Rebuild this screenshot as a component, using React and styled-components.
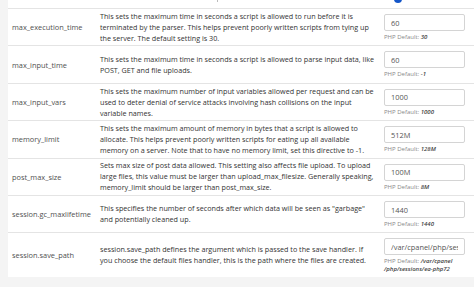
import styled, { createGlobalStyle } from "styled-components";

const GlobalStyle = createGlobalStyle`
  html, body {
    margin: 0;
    padding: 0;
    background: #f4f4f4;
    overflow: hidden;
  }
  body {
    font-family: "Open Sans", "Liberation Sans", sans-serif;
    color: #333;
  }
`;

const settings = [
  {
    name: "max_execution_time",
    desc: "This sets the maximum time in seconds a script is allowed to run before it is terminated by the parser. This helps prevent poorly written scripts from tying up the server. The default setting is 30.",
    value: "60",
    def: "30",
  },
  {
    name: "max_input_time",
    desc: "This sets the maximum time in seconds a script is allowed to parse input data, like POST, GET and file uploads.",
    value: "60",
    def: "-1",
  },
  {
    name: "max_input_vars",
    desc: "This sets the maximum number of input variables allowed per request and can be used to deter denial of service attacks involving hash collisions on the input variable names.",
    value: "1000",
    def: "1000",
  },
  {
    name: "memory_limit",
    desc: "This sets the maximum amount of memory in bytes that a script is allowed to allocate. This helps prevent poorly written scripts for eating up all available memory on a server. Note that to have no memory limit, set this directive to -1.",
    value: "512M",
    def: "128M",
  },
  {
    name: "post_max_size",
    desc: "Sets max size of post data allowed. This setting also affects file upload. To upload large files, this value must be larger than upload_max_filesize. Generally speaking, memory_limit should be larger than post_max_size.",
    value: "100M",
    def: "8M",
  },
  {
    name: "session.gc_maxlifetime",
    desc: 'This specifies the number of seconds after which data will be seen as "garbage" and potentially cleaned up.',
    value: "1440",
    def: "1440",
  },
  {
    name: "session.save_path",
    desc: "session.save_path defines the argument which is passed to the save handler. If you choose the default files handler, this is the path where the files are created.",
    value: "/var/cpanel/php/sessions/ea-php72",
    def: "/var/cpanel /php/sessions/ea-php72",
  },
];

const Panel = styled.div`
  margin-left: 8px;
  width: 480px;
  background: #fff;
`;

const HeaderRow = styled.div`
  display: grid;
  grid-template-columns: 88px 284px 1fr;
  height: 8px;
  overflow: hidden;
  border-bottom: 1px solid #e4e4e4;
`;

const HeaderCell = styled.div`
  position: relative;
`;

const SortTick = styled.span`
  position: absolute;
  left: 121px;
  top: 0;
  width: 1px;
  height: 2px;
  background: #bbb;
`;

const ToggleDot = styled.span`
  position: absolute;
  left: 14px;
  top: -5px;
  width: 8px;
  height: 8px;
  border-radius: 50%;
  background: #1456c8;
`;

const Row = styled.div`
  display: grid;
  grid-template-columns: 88px 284px 1fr;
  border-bottom: 1px solid #e4e4e4;
  &:last-child {
    border-bottom: none;
  }
`;

const NameCell = styled.div`
  display: flex;
  align-items: center;
  padding: 0 4px;
  font-size: 7.4px;
  color: #505050;
  white-space: nowrap;
`;

const DescCell = styled.div`
  display: flex;
  align-items: center;
  padding: 0 3px 0 4px;
  font-size: 7.2px;
  line-height: 11px;
  color: #333;
`;

const ValueCell = styled.div`
  padding: 5px 4px 4px 4px;
  display: flex;
  flex-direction: column;
  gap: 3px;
`;

const Input = styled.input`
  box-sizing: border-box;
  width: 81px;
  height: 17px;
  border: 1px solid #d4d4d4;
  border-radius: 2px;
  padding: 0 6px;
  font-family: "Open Sans", "Liberation Sans", sans-serif;
  font-size: 7.4px;
  color: #555;
  background: #fff;
  outline: none;
`;

const Default = styled.div`
  width: 84px;
  font-size: 6px;
  line-height: 7.4px;
  color: #888;
`;

const DefaultValue = styled.em`
  color: #444;
  font-weight: 600;
`;

export default function App() {
  return (
    <>
      <GlobalStyle />
      <Panel>
        <HeaderRow>
          <HeaderCell />
          <HeaderCell>
            <SortTick />
          </HeaderCell>
          <HeaderCell>
            <ToggleDot />
          </HeaderCell>
        </HeaderRow>
        {settings.map((s) => (
          <Row key={s.name}>
            <NameCell>{s.name}</NameCell>
            <DescCell>{s.desc}</DescCell>
            <ValueCell>
              <Input defaultValue={s.value} readOnly />
              <Default>
                PHP Default: <DefaultValue>{s.def}</DefaultValue>
              </Default>
            </ValueCell>
          </Row>
        ))}
      </Panel>
    </>
  );
}
